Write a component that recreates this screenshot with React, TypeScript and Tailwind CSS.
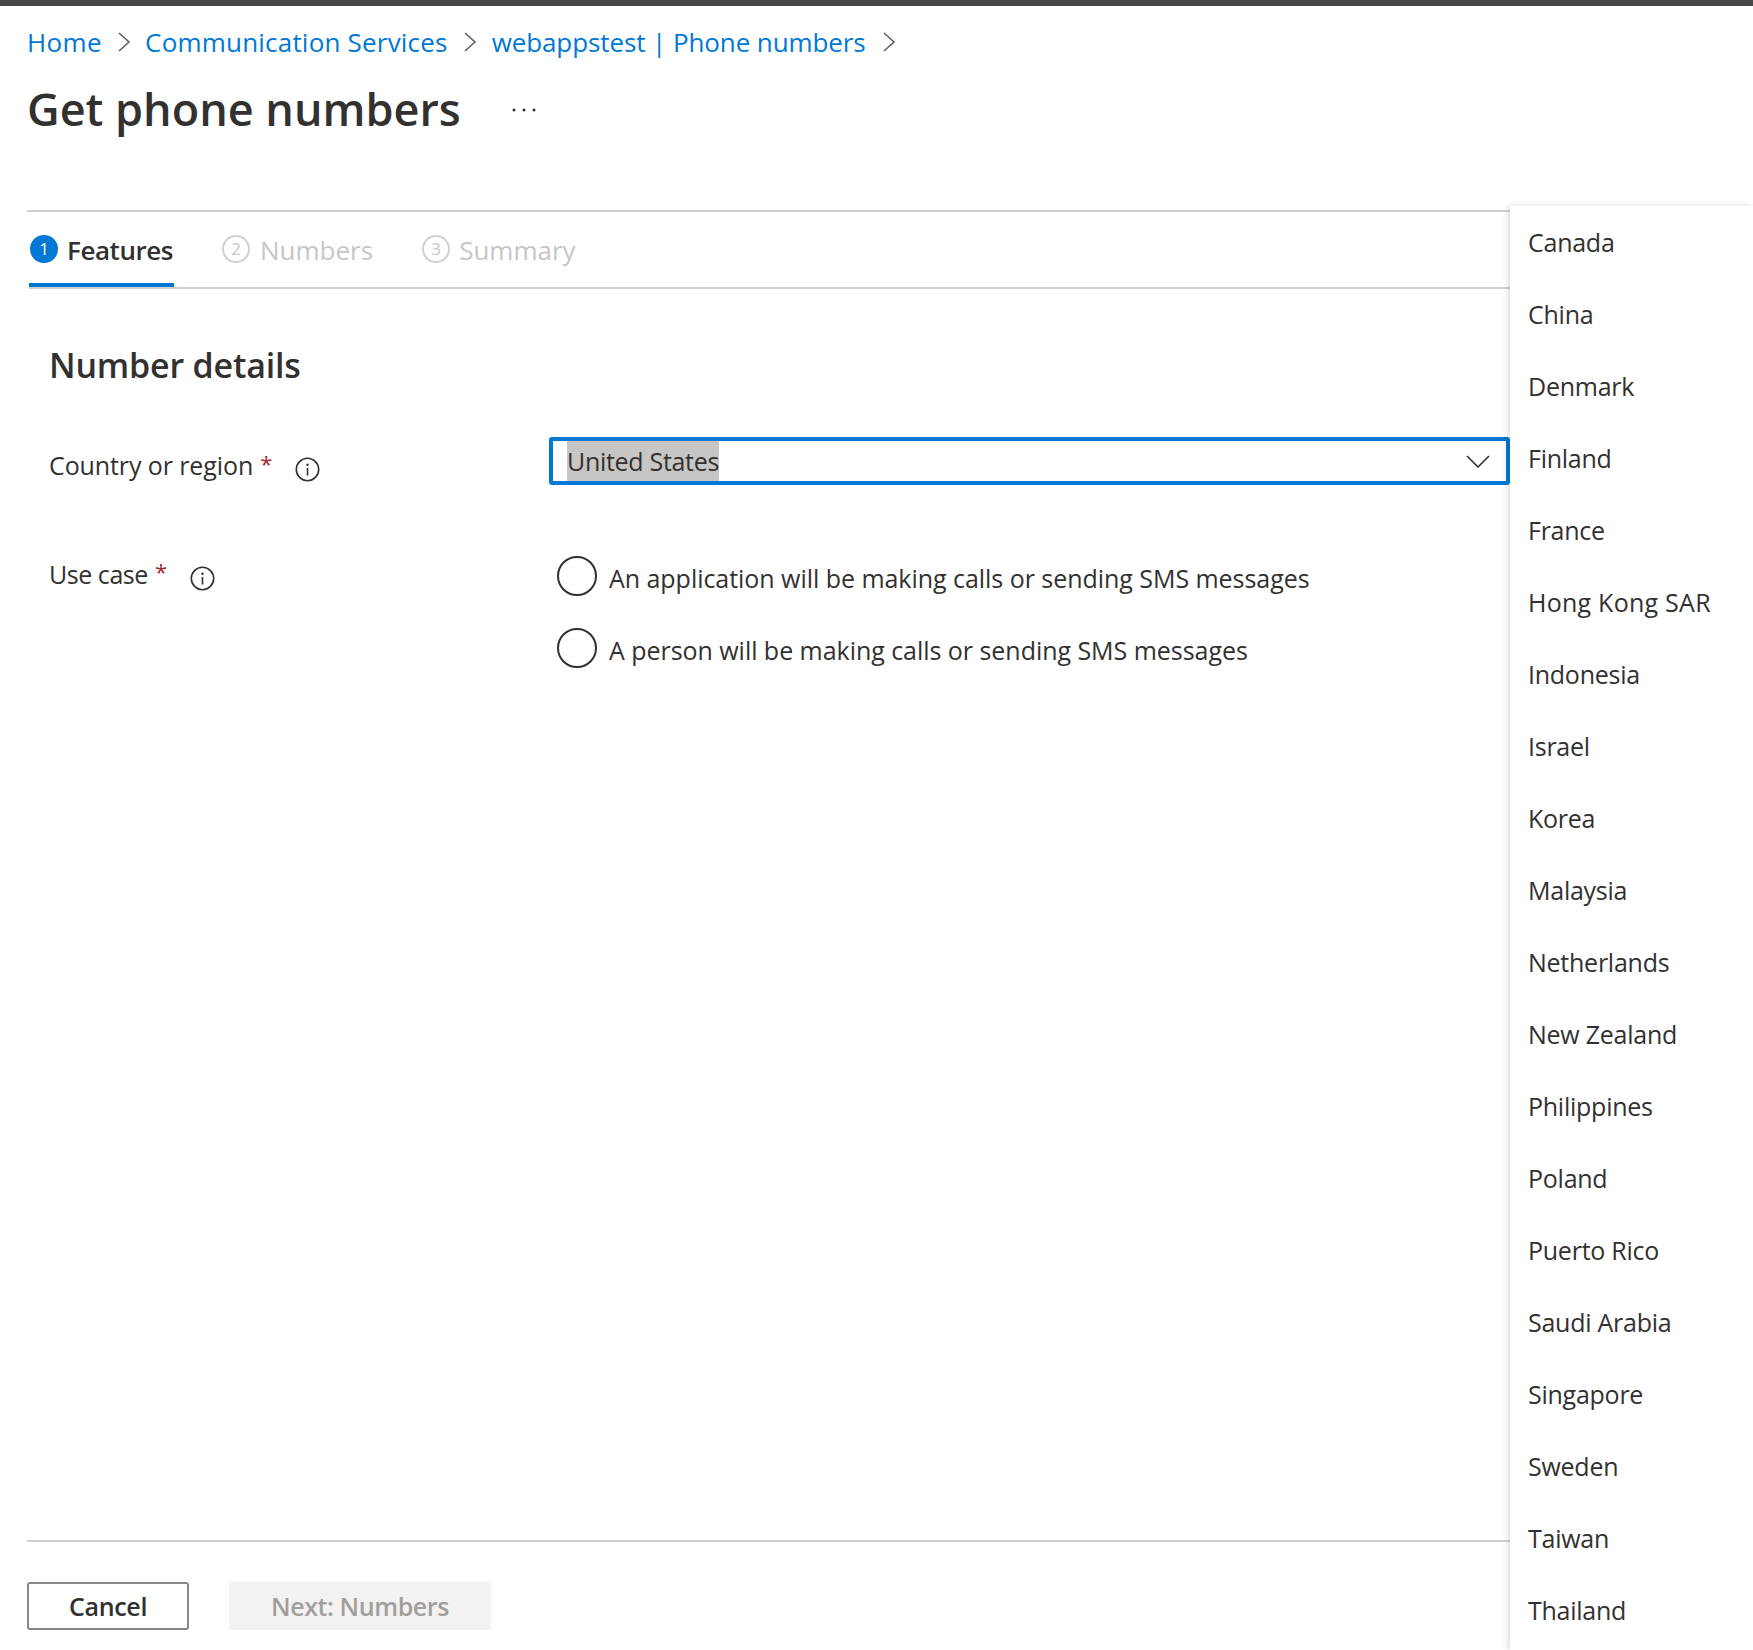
export default function App() {
  const countries = ["Canada","China","Denmark","Finland","France","Hong Kong SAR","Indonesia","Israel","Korea","Malaysia","Netherlands","New Zealand","Philippines","Poland","Puerto Rico","Saudi Arabia","Singapore","Sweden","Taiwan","Thailand"];
  const Crumb = () => (
    <svg width="14" height="22" viewBox="0 0 14 22" className="shrink-0"><path d="M2 2 L12 11 L2 20" fill="none" stroke="#605e5c" strokeWidth="1.6" /></svg>
  );
  const Info = () => (
    <svg width="25" height="25" viewBox="0 0 25 25" className="shrink-0"><circle cx="12.5" cy="12.5" r="11.2" fill="none" stroke="#323130" strokeWidth="1.6" /><circle cx="12.5" cy="7.8" r="1.2" fill="#323130" /><path d="M12.5 11 V18.5" stroke="#323130" strokeWidth="1.6" /></svg>
  );
  const Radio = ({ text }: { text: string }) => (
    <div className="flex items-center h-[40px]">
      <span className="w-[40px] h-[40px] rounded-full border-2 border-[#323130] shrink-0" />
      <span className="ml-[12px] mt-[4px] text-[25px] tracking-[-0.04px] leading-[40px] whitespace-nowrap">{text}</span>
    </div>
  );
  return (
    <div className="relative w-[1753px] h-[1650px] overflow-hidden bg-white text-[#323130] font-['Open_Sans',sans-serif]">
      <div className="h-[6px] bg-[#484644]" />
      <div className="w-[1510px] h-[1644px] pl-[27px] flex flex-col">
        <nav className="mt-[16px] h-[40px] flex items-center text-[26px] text-[#0078d4] whitespace-nowrap">
          <a className="tracking-[0.4px]">Home</a>
          <span className="ml-[15px]"><Crumb /></span>
          <a className="ml-[14px] tracking-[0.2px]">Communication Services</a>
          <span className="ml-[15px]"><Crumb /></span>
          <a className="ml-[15px] tracking-[-0.1px]">webappstest | Phone numbers</a>
          <span className="ml-[16px]"><Crumb /></span>
        </nav>
        <div className="mt-[17px] h-[60px] flex items-center">
          <h1 className="text-[45px] font-semibold leading-[60px] whitespace-nowrap">Get phone numbers</h1>
          <svg width="24" height="4" viewBox="0 0 24 4" className="ml-[51px] mt-[2px] shrink-0"><circle cx="2" cy="2" r="1.5" fill="#323130" /><circle cx="12" cy="2" r="1.5" fill="#323130" /><circle cx="22" cy="2" r="1.5" fill="#323130" /></svg>
        </div>
        <div className="mt-[71px] h-[2px] bg-[#d2d0ce]" />
        <div className="ml-[2px] h-[77px] border-b-2 border-[#d2d0ce] flex items-start">
          <div className="h-[75px] w-[145px] border-b-4 border-[#0078d4] flex items-start -mb-[2px] pt-[23px]">
            <span className="ml-[1px] w-[28px] h-[28px] rounded-full bg-[#0078d4] text-white text-[17px] flex items-center justify-center shrink-0">1</span>
            <span className="ml-[9px] -mt-[1px] text-[26px] font-semibold tracking-[-0.45px] leading-[32px]">Features</span>
          </div>
          <div className="ml-[48px] flex items-start pt-[23px] text-[#c8c6c4]">
            <span className="w-[28px] h-[28px] rounded-full border-2 border-[#d2d0ce] text-[17px] flex items-center justify-center shrink-0">2</span>
            <span className="ml-[10px] -mt-[1px] text-[26px] leading-[32px]">Numbers</span>
          </div>
          <div className="ml-[49px] flex items-start pt-[23px] text-[#c8c6c4]">
            <span className="w-[28px] h-[28px] rounded-full border-2 border-[#d2d0ce] text-[17px] flex items-center justify-center shrink-0">3</span>
            <span className="ml-[9px] -mt-[1px] text-[26px] leading-[32px]">Summary</span>
          </div>
        </div>
        <div className="flex-1 pl-[22px]">
          <h2 className="mt-[54px] h-[44px] text-[34px] font-semibold tracking-[-0.2px] leading-[44px]">Number details</h2>
          <div className="mt-[50px] flex h-[48px]">
            <div className="w-[500px] flex items-start pt-[10px]">
              <span className="-mt-[2px] text-[25px] tracking-[-0.1px] leading-[40px] whitespace-nowrap">Country or region</span>
              <span className="ml-[7px] text-[22px] leading-[32px] text-[#a4262c]">*</span>
              <span className="ml-[23px] mt-[10px]"><Info /></span>
            </div>
            <div className="w-[961px] h-[48px] border-4 border-[#0078d4] rounded-[3px] flex items-center pl-[14px] pr-[16px] justify-between">
              <span className="h-[40px] bg-[#c8c6c4] text-[25px] tracking-[-0.3px] leading-[40px] whitespace-nowrap">United States</span>
              <svg width="24" height="13" viewBox="0 0 24 13" className="shrink-0"><path d="M1 1 L12 12 L23 1" fill="none" stroke="#323130" strokeWidth="1.6" /></svg>
            </div>
          </div>
          <div className="mt-[71px] flex">
            <div className="w-[508px] flex items-start">
              <span className="text-[25px] tracking-[-0.45px] leading-[40px] -mt-[2px]">Use case</span>
              <span className="ml-[7px] text-[22px] leading-[32px] -mt-[1px] text-[#a4262c]">*</span>
              <span className="ml-[23px] mt-[10px]"><Info /></span>
            </div>
            <div className="flex flex-col gap-[32px]">
              <Radio text="An application will be making calls or sending SMS messages" />
              <Radio text="A person will be making calls or sending SMS messages" />
            </div>
          </div>
        </div>
        <div className="h-[2px] bg-[#d2d0ce]" />
        <div className="mt-[40px] mb-[20px] flex gap-[40px]">
          <button className="w-[162px] h-[48px] pt-[2px] border-2 border-[#8a8886] rounded-[3px] bg-white text-[25px] font-semibold tracking-[-0.3px] text-[#323130]">Cancel</button>
          <button className="w-[262px] h-[48px] pt-[2px] rounded-[3px] bg-[#f3f2f1] text-[25px] font-semibold tracking-[-0.4px] text-[#a19f9d]">Next: Numbers</button>
        </div>
      </div>
      <div className="absolute left-[1510px] top-[206px] bottom-0 right-0 bg-white rounded-tl-[3px] pt-[1px] shadow-[-2px_0_6px_rgba(0,0,0,0.14)]">
        {countries.map((c) => (
          <div key={c} className={c === "Hong Kong SAR" ? "h-[72px] pl-[18px] flex items-center text-[25px] tracking-[0.25px] whitespace-nowrap" : "h-[72px] pl-[18px] flex items-center text-[25px] tracking-[-0.25px] whitespace-nowrap"}>{c}</div>
        ))}
      </div>
    </div>
  );
}
